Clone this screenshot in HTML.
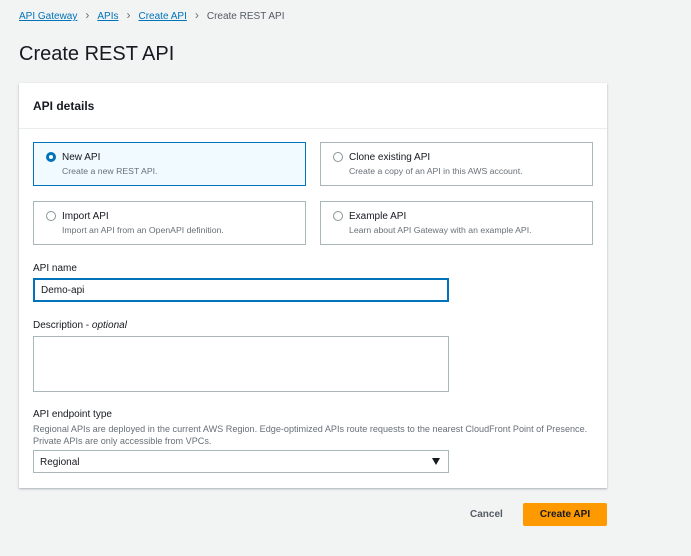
<!DOCTYPE html>
<html><head><style>
*{box-sizing:border-box;margin:0;padding:0}
body{width:691px;height:556px;background:#f2f3f3;font-family:"Liberation Sans",sans-serif;position:relative;overflow:hidden;color:#16191f}
.a{position:absolute}
.bc{top:10px;left:19px;font-size:10px;color:#545b64}
.bc a{color:#0073bb;text-decoration:underline}
.bc span.s{margin:0 8px;color:#687078;font-size:12px;line-height:10px}
h1{position:absolute;top:43px;left:19px;font-size:20px;font-weight:400}
.panel{left:19px;top:83px;width:588px;height:405px;background:#fff;box-shadow:0 1px 2px rgba(0,28,36,.3)}
.ph{left:0;top:0;width:588px;height:46px;border-bottom:1px solid #eaeded;padding:16px 0 0 14px;font-weight:700;font-size:12px}
.card{border:1px solid #aab7b8;width:273px;height:44px;padding:9px 0 0 28px;font-size:10px}
.card.sel{border-color:#0073bb;background:#f1faff}
.card b{display:block;font-weight:400;color:#16191f}
.card i{display:block;font-style:normal;font-size:8.7px;color:#687078;margin-top:3px}
.r{position:absolute;left:12px;top:9px;width:10px;height:10px;border-radius:50%;border:1px solid #879596;background:#fff}
.sel .r{border:3px solid #0073bb}
.lbl{font-size:10px;color:#16191f}
.in{border:1px solid #aab7b8;width:416px;font-size:10px;padding:5px 6px;background:#fff}
</style></head><body>
<div class="a bc"><a>API Gateway</a><span class="s">&rsaquo;</span><a>APIs</a><span class="s">&rsaquo;</span><a>Create API</a><span class="s">&rsaquo;</span>Create REST API</div>
<h1>Create REST API</h1>
<div class="a panel">
<div class="a ph">API details</div>
<div class="a card sel" style="left:14px;top:59px"><div class="r"></div><b>New API</b><i>Create a new REST API.</i></div>
<div class="a card" style="left:301px;top:59px"><div class="r"></div><b>Clone existing API</b><i>Create a copy of an API in this AWS account.</i></div>
<div class="a card" style="left:14px;top:118px"><div class="r"></div><b>Import API</b><i>Import an API from an OpenAPI definition.</i></div>
<div class="a card" style="left:301px;top:118px"><div class="r"></div><b>Example API</b><i>Learn about API Gateway with an example API.</i></div>
<div class="a lbl" style="left:14px;top:180px">API name</div>
<div class="a in" style="left:14px;top:195px;height:24px;border:2px solid #0073bb;padding:5px 6px">Demo-api</div>
<div class="a lbl" style="left:14px;top:237px">Description - <i>optional</i></div>
<div class="a in" style="left:14px;top:253px;height:56px"></div>
<div class="a lbl" style="left:14px;top:326px">API endpoint type</div>
<div class="a" style="left:14px;top:340px;font-size:9.1px;color:#687078;line-height:12px;white-space:nowrap">Regional APIs are deployed in the current AWS Region. Edge-optimized APIs route requests to the nearest CloudFront Point of Presence.<br>Private APIs are only accessible from VPCs.</div>
<div class="a in" style="left:14px;top:367px;height:23px;padding:6px 6px">Regional<span style="position:absolute;right:8px;top:7px;width:0;height:0;border-left:4px solid transparent;border-right:4px solid transparent;border-top:7px solid #16191f"></span></div>
</div>
<div class="a" style="left:470px;top:509px;font-size:10px;font-weight:700;color:#545b64">Cancel</div>
<div class="a" style="left:523px;top:503px;width:84px;height:23px;background:#ff9900;font-size:10px;font-weight:700;text-align:center;line-height:23px;border-radius:2px">Create API</div>
</body></html>
